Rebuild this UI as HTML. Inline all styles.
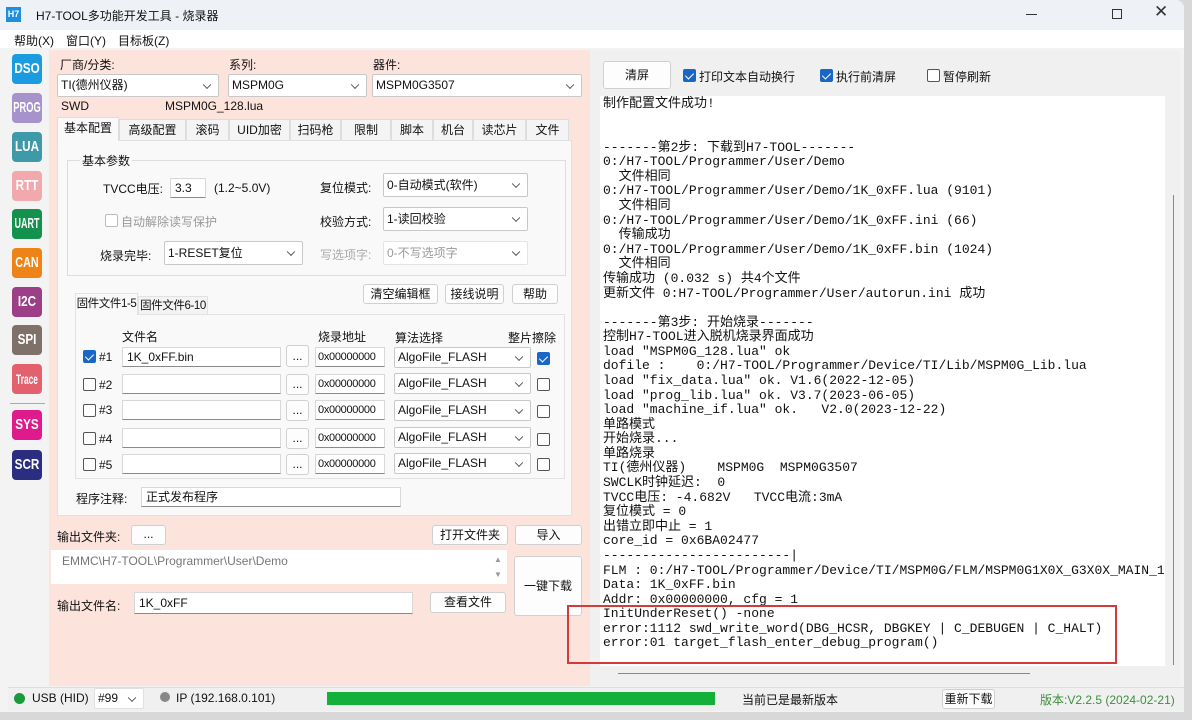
<!DOCTYPE html>
<html><head><meta charset="utf-8"><style>
*{box-sizing:border-box;margin:0;padding:0}
body{width:1192px;height:720px;position:relative;overflow:hidden;background:#d8d8d8;font-family:"Liberation Sans","Noto Sans CJK SC",sans-serif;font-size:12px;color:#111}
.a{position:absolute;white-space:nowrap}
.inp{position:absolute;background:#fff;border:1px solid #d8d8d8;border-bottom:1px solid #8a8a8a;padding-left:4px;line-height:18px;font-size:12px;white-space:nowrap;overflow:hidden}
.sel{position:absolute;background:#fff;border:1px solid #c8c8c8;border-radius:2px;padding-left:3px;font-size:12px;white-space:nowrap;overflow:hidden}
.sel:after{content:"";position:absolute;right:8px;top:50%;width:5px;height:5px;border-right:1px solid #555;border-bottom:1px solid #555;transform:translateY(-70%) rotate(45deg)}
.btn{position:absolute;background:#fdfdfd;border:1px solid #d0d0d0;border-radius:3px;text-align:center;font-size:12px;white-space:nowrap}
.cb{position:absolute;width:13px;height:13px;border:1px solid #555;border-radius:2px;background:#fff}
.cb.on{background:#1a66c6;border-color:#1a66c6}
.cb.on:after{content:"";position:absolute;left:3px;top:1px;width:4px;height:7px;border-right:1.5px solid #fff;border-bottom:1.5px solid #fff;transform:rotate(45deg)}
.ic{position:absolute;left:12px;width:30px;height:30px;border-radius:4px;overflow:hidden}
.ic span{position:absolute;left:50%;top:0;line-height:30px;color:#fff;font-weight:bold;font-size:15px;font-family:"Liberation Sans",sans-serif;transform:translateX(-50%) scaleX(0.78)}
.tab{position:absolute;top:119px;height:21px;border:1px solid #ddd;border-bottom:none;background:#f4f4f4;text-align:center;line-height:20px;font-size:12px}
.ad{font-size:11px;letter-spacing:-0.3px;padding-left:2px}
pre{font-family:"Liberation Mono","Noto Sans CJK SC",monospace;font-size:13px;line-height:14.58px;color:#111}
</style></head><body>
<div class="a" style="left:0;top:0;width:1184px;height:712px;background:#f3f3f3;border-radius:0 8px 0 0"></div>
<div class="a" style="left:0;top:0;width:1184px;height:30px;background:#eef1f6;border-radius:0 8px 0 0"></div>
<div class="a" style="left:6px;top:7px;width:15px;height:15px;background:#1e8ee0;color:#fff;font-size:9px;font-weight:bold;line-height:15px;text-align:center">H7</div>
<div class="a" style="left:36px;top:7px;font-size:12px">H7-TOOL多功能开发工具 - 烧录器</div>
<div class="a" style="left:1026px;top:14px;width:11px;height:1px;background:#333"></div>
<div class="a" style="left:1112px;top:9px;width:10px;height:10px;border:1px solid #333"></div>
<div class="a" style="left:1154px;top:2px;font-size:17px;color:#333">✕</div>
<div class="a" style="left:0;top:30px;width:1184px;height:18px;background:#fff"></div>
<div class="a" style="left:14px;top:32px">帮助(X)</div>
<div class="a" style="left:66px;top:32px">窗口(Y)</div>
<div class="a" style="left:118px;top:32px">目标板(Z)</div>
<div class="ic" style="top:54px;background:#1b9be0"><span>DSO</span></div>
<div class="ic" style="top:93px;background:#a793cb"><span style="transform:translateX(-50%) scaleX(0.62)">PROG</span></div>
<div class="ic" style="top:132px;background:#3e9aa8"><span>LUA</span></div>
<div class="ic" style="top:171px;background:#f1a9ad"><span>RTT</span></div>
<div class="ic" style="top:209px;background:#15914e"><span style="transform:translateX(-50%) scaleX(0.6)">UART</span></div>
<div class="ic" style="top:248px;background:#ee8418"><span style="transform:translateX(-50%) scaleX(0.72)">CAN</span></div>
<div class="ic" style="top:287px;background:#9c3f87"><span>I2C</span></div>
<div class="ic" style="top:325px;background:#80706a"><span>SPI</span></div>
<div class="ic" style="top:364px;background:#e2616d"><span style="font-size:14px;transform:translateX(-50%) scaleX(0.6)">Trace</span></div>
<div class="a" style="left:10px;top:403px;width:35px;height:1px;background:#aaa"></div>
<div class="ic" style="top:410px;background:#df1a8d"><span>SYS</span></div>
<div class="ic" style="top:450px;background:#2a2d80"><span>SCR</span></div>
<div class="a" style="left:49px;top:50px;width:541px;height:636px;background:#fce4dc"></div>
<div class="a" style="left:60px;top:56px">厂商/分类:</div>
<div class="a" style="left:229px;top:56px">系列:</div>
<div class="a" style="left:373px;top:56px">器件:</div>
<div class="sel" style="left:57px;top:74px;width:162px;height:23px;line-height:21px">TI(德州仪器)</div>
<div class="sel" style="left:228px;top:74px;width:139px;height:23px;line-height:21px">MSPM0G</div>
<div class="sel" style="left:372px;top:74px;width:210px;height:23px;line-height:21px">MSPM0G3507</div>
<div class="a" style="left:61px;top:99px">SWD</div>
<div class="a" style="left:165px;top:99px">MSPM0G_128.lua</div>
<div class="a" style="left:57px;top:140px;width:515px;height:376px;background:#f9f9f9;border:1px solid #e0e0e0"></div>
<div class="tab" style="left:57px;width:62px;background:#f9f9f9;top:117px;height:24px">基本配置</div>
<div class="tab" style="left:119px;width:67px">高级配置</div>
<div class="tab" style="left:186px;width:43px">滚码</div>
<div class="tab" style="left:229px;width:61px">UID加密</div>
<div class="tab" style="left:290px;width:51px">扫码枪</div>
<div class="tab" style="left:341px;width:50px">限制</div>
<div class="tab" style="left:391px;width:42px">脚本</div>
<div class="tab" style="left:433px;width:40px">机台</div>
<div class="tab" style="left:473px;width:53px">读芯片</div>
<div class="tab" style="left:526px;width:43px">文件</div>
<div class="a" style="left:67px;top:160px;width:499px;height:116px;border:1px solid #ddd"></div>
<div class="a" style="left:80px;top:152px;background:#f9f9f9;padding:0 2px">基本参数</div>
<div class="a" style="left:103px;top:180px">TVCC电压:</div>
<div class="inp" style="left:170px;top:178px;width:36px;height:20px">3.3</div>
<div class="a" style="left:214px;top:181px">(1.2~5.0V)</div>
<div class="a" style="left:320px;top:179px">复位模式:</div>
<div class="sel" style="left:383px;top:173px;width:145px;height:24px;line-height:22px">0-自动模式(软件)</div>
<div class="cb" style="left:105px;top:214px;border-color:#bbb"></div>
<div class="a" style="left:121px;top:213px;color:#999">自动解除读写保护</div>
<div class="a" style="left:320px;top:213px">校验方式:</div>
<div class="sel" style="left:383px;top:207px;width:145px;height:24px;line-height:22px">1-读回校验</div>
<div class="a" style="left:100px;top:247px">烧录完毕:</div>
<div class="sel" style="left:164px;top:241px;width:139px;height:24px;line-height:22px">1-RESET复位</div>
<div class="a" style="left:320px;top:246px;color:#aaa">写选项字:</div>
<div class="sel" style="left:383px;top:241px;width:145px;height:24px;line-height:22px;color:#999;border-color:#e4e4e4">0-不写选项字</div>
<div class="btn" style="left:363px;top:284px;width:75px;height:20px;line-height:18px">清空编辑框</div>
<div class="btn" style="left:445px;top:284px;width:59px;height:20px;line-height:18px">接线说明</div>
<div class="btn" style="left:512px;top:284px;width:46px;height:20px;line-height:18px">帮助</div>
<div class="a" style="left:75px;top:314px;width:490px;height:165px;border:1px solid #e2e2e2;background:#f9f9f9"></div>
<div class="a" style="left:75px;top:293px;width:63px;height:22px;border:1px solid #e2e2e2;border-bottom:none;background:#f9f9f9;text-align:center;line-height:20px;font-size:11.5px;letter-spacing:-0.4px">固件文件1-5</div>
<div class="a" style="left:138px;top:296px;width:70px;height:18px;border:1px solid #e2e2e2;border-bottom:none;background:#f3f3f3;text-align:center;line-height:18px;font-size:11.5px;letter-spacing:-0.4px">固件文件6-10</div>
<div class="a" style="left:122px;top:328px">文件名</div>
<div class="a" style="left:318px;top:328px">烧录地址</div>
<div class="a" style="left:395px;top:329px">算法选择</div>
<div class="a" style="left:508px;top:329px">整片擦除</div>

<div class="cb on" style="left:83px;top:350px"></div><div class="a" style="left:99px;top:350px">#1</div>
<div class="inp" style="left:122px;top:347px;width:159px;height:20px">1K_0xFF.bin</div>
<div class="btn" style="left:286px;top:345px;width:23px;height:22px;line-height:20px">...</div>
<div class="inp ad" style="left:315px;top:347px;width:70px;height:20px">0x00000000</div>
<div class="sel" style="left:394px;top:347px;width:137px;height:21px;line-height:19px">AlgoFile_FLASH</div>
<div class="cb on" style="left:537px;top:352px"></div>

<div class="cb" style="left:83px;top:378px"></div><div class="a" style="left:99px;top:378px">#2</div>
<div class="inp" style="left:122px;top:374px;width:159px;height:20px"></div>
<div class="btn" style="left:286px;top:374px;width:23px;height:21px;line-height:19px">...</div>
<div class="inp ad" style="left:315px;top:374px;width:70px;height:20px">0x00000000</div>
<div class="sel" style="left:394px;top:373px;width:137px;height:21px;line-height:19px">AlgoFile_FLASH</div>
<div class="cb" style="left:537px;top:378px"></div>

<div class="cb" style="left:83px;top:404px"></div><div class="a" style="left:99px;top:403px">#3</div>
<div class="inp" style="left:122px;top:400px;width:159px;height:20px"></div>
<div class="btn" style="left:286px;top:400px;width:23px;height:21px;line-height:19px">...</div>
<div class="inp ad" style="left:315px;top:400px;width:70px;height:20px">0x00000000</div>
<div class="sel" style="left:394px;top:400px;width:137px;height:21px;line-height:19px">AlgoFile_FLASH</div>
<div class="cb" style="left:537px;top:405px"></div>

<div class="cb" style="left:83px;top:432px"></div><div class="a" style="left:99px;top:432px">#4</div>
<div class="inp" style="left:122px;top:428px;width:159px;height:20px"></div>
<div class="btn" style="left:286px;top:428px;width:23px;height:21px;line-height:19px">...</div>
<div class="inp ad" style="left:315px;top:428px;width:70px;height:20px">0x00000000</div>
<div class="sel" style="left:394px;top:427px;width:137px;height:21px;line-height:19px">AlgoFile_FLASH</div>
<div class="cb" style="left:537px;top:433px"></div>

<div class="cb" style="left:83px;top:458px"></div><div class="a" style="left:99px;top:458px">#5</div>
<div class="inp" style="left:122px;top:454px;width:159px;height:20px"></div>
<div class="btn" style="left:286px;top:454px;width:23px;height:21px;line-height:19px">...</div>
<div class="inp ad" style="left:315px;top:454px;width:70px;height:20px">0x00000000</div>
<div class="sel" style="left:394px;top:453px;width:137px;height:21px;line-height:19px">AlgoFile_FLASH</div>
<div class="cb" style="left:537px;top:458px"></div>

<div class="a" style="left:76px;top:490px">程序注释:</div>
<div class="inp" style="left:141px;top:487px;width:260px;height:20px">正式发布程序</div>
<div class="a" style="left:57px;top:528px">输出文件夹:</div>
<div class="btn" style="left:131px;top:525px;width:35px;height:20px;line-height:16px">...</div>
<div class="btn" style="left:432px;top:525px;width:76px;height:20px;line-height:18px">打开文件夹</div>
<div class="btn" style="left:515px;top:525px;width:67px;height:20px;line-height:18px">导入</div>
<div class="a" style="left:51px;top:550px;width:456px;height:34px;background:#fff"></div>
<div class="a" style="left:62px;top:554px;color:#777">EMMC\H7-TOOL\Programmer\User\Demo</div>
<div class="a" style="left:494px;top:555px;font-size:8px;color:#999">▲</div>
<div class="a" style="left:494px;top:570px;font-size:8px;color:#999">▼</div>
<div class="btn" style="left:514px;top:556px;width:68px;height:60px;line-height:58px">一键下载</div>
<div class="a" style="left:57px;top:597px">输出文件名:</div>
<div class="inp" style="left:134px;top:592px;width:279px;height:22px;line-height:20px">1K_0xFF</div>
<div class="btn" style="left:430px;top:592px;width:76px;height:21px;line-height:19px">查看文件</div>
<div class="a" style="left:590px;top:50px;width:590px;height:636px;background:#f0f0f0"></div>
<div class="btn" style="left:603px;top:61px;width:68px;height:28px;line-height:26px">清屏</div>
<div class="cb on" style="left:683px;top:69px"></div><div class="a" style="left:699px;top:68px">打印文本自动换行</div>
<div class="cb on" style="left:820px;top:69px"></div><div class="a" style="left:836px;top:68px">执行前清屏</div>
<div class="cb" style="left:927px;top:69px"></div><div class="a" style="left:943px;top:68px">暂停刷新</div>
<div class="a" style="left:600px;top:96px;width:565px;height:570px;background:#fff;overflow:hidden">
<pre style="position:absolute;left:3px;top:1px">制作配置文件成功!


-------第2步: 下载到H7-TOOL-------
0:/H7-TOOL/Programmer/User/Demo
  文件相同
0:/H7-TOOL/Programmer/User/Demo/1K_0xFF.lua (9101)
  文件相同
0:/H7-TOOL/Programmer/User/Demo/1K_0xFF.ini (66)
  传输成功
0:/H7-TOOL/Programmer/User/Demo/1K_0xFF.bin (1024)
  文件相同
传输成功 (0.032 s) 共4个文件
更新文件 0:H7-TOOL/Programmer/User/autorun.ini 成功

-------第3步: 开始烧录-------
控制H7-TOOL进入脱机烧录界面成功
load "MSPM0G_128.lua" ok
dofile :    0:/H7-TOOL/Programmer/Device/TI/Lib/MSPM0G_Lib.lua
load "fix_data.lua" ok. V1.6(2022-12-05)
load "prog_lib.lua" ok. V3.7(2023-06-05)
load "machine_if.lua" ok.   V2.0(2023-12-22)
单路模式
开始烧录...
单路烧录
TI(德州仪器)    MSPM0G  MSPM0G3507
SWCLK时钟延迟:  0
TVCC电压: -4.682V   TVCC电流:3mA
复位模式 = 0
出错立即中止 = 1
core_id = 0x6BA02477
------------------------|
FLM : 0:/H7-TOOL/Programmer/Device/TI/MSPM0G/FLM/MSPM0G1X0X_G3X0X_MAIN_128.FLM
Data: 1K_0xFF.bin
Addr: 0x00000000, cfg = 1
InitUnderReset() -none
error:1112 swd_write_word(DBG_HCSR, DBGKEY | C_DEBUGEN | C_HALT)
error:01 target_flash_enter_debug_program()</pre>
</div>
<div class="a" style="left:1173px;top:195px;width:1px;height:470px;background:#888"></div>
<div class="a" style="left:618px;top:673px;width:412px;height:1px;background:#888"></div>
<div class="a" style="left:567px;top:605px;width:550px;height:59px;border:2px solid #d33a3a"></div>
<div class="a" style="left:8px;top:687px;width:1176px;height:24px;background:#f0f0f0;border-top:1px solid #ddd"></div>
<div class="a" style="left:14px;top:693px;width:11px;height:11px;border-radius:50%;background:#1a9a3a"></div>
<div class="a" style="left:32px;top:691px">USB (HID)</div>
<div class="sel" style="left:94px;top:688px;width:50px;height:21px;line-height:19px;border-color:#e0e0e0">#99</div>
<div class="a" style="left:160px;top:692px;width:10px;height:10px;border-radius:50%;background:#888"></div>
<div class="a" style="left:176px;top:691px">IP (192.168.0.101)</div>
<div class="a" style="left:327px;top:692px;width:388px;height:13px;background:#13b13a"></div>
<div class="a" style="left:742px;top:691px">当前已是最新版本</div>
<div class="btn" style="left:942px;top:689px;width:53px;height:20px;line-height:18px">重新下载</div>
<div class="a" style="left:1040px;top:691px;color:#3d8f3d">版本:V2.2.5 (2024-02-21)</div>
</body></html>
